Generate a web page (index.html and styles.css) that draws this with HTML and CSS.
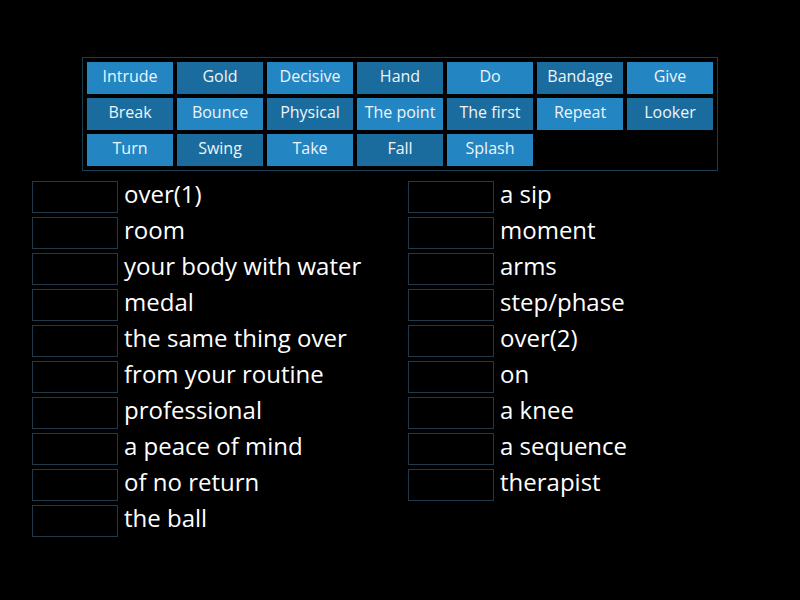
FILE: index.html
```html
<!DOCTYPE html>
<html lang="en">
<head>
    <meta charset="UTF-8">
    <title>Match up</title>
    <link rel="stylesheet" href="styles.css">
</head>
<body>
    <div class="bank">
        <div class="tile light">Intrude</div>
        <div class="tile dark">Gold</div>
        <div class="tile light">Decisive</div>
        <div class="tile dark">Hand</div>
        <div class="tile light">Do</div>
        <div class="tile dark">Bandage</div>
        <div class="tile light">Give</div>
        <div class="tile dark">Break</div>
        <div class="tile light">Bounce</div>
        <div class="tile dark">Physical</div>
        <div class="tile light">The point</div>
        <div class="tile dark">The first</div>
        <div class="tile light">Repeat</div>
        <div class="tile dark">Looker</div>
        <div class="tile light">Turn</div>
        <div class="tile dark">Swing</div>
        <div class="tile light">Take</div>
        <div class="tile dark">Fall</div>
        <div class="tile light">Splash</div>
    </div>

    <div class="matches">
        <div class="col">
            <div class="row"><span class="slot"></span><span class="clue">over(1)</span></div>
            <div class="row"><span class="slot"></span><span class="clue">room</span></div>
            <div class="row"><span class="slot"></span><span class="clue">your body with water</span></div>
            <div class="row"><span class="slot"></span><span class="clue">medal</span></div>
            <div class="row"><span class="slot"></span><span class="clue">the same thing over</span></div>
            <div class="row"><span class="slot"></span><span class="clue">from your routine</span></div>
            <div class="row"><span class="slot"></span><span class="clue">professional</span></div>
            <div class="row"><span class="slot"></span><span class="clue">a peace of mind</span></div>
            <div class="row"><span class="slot"></span><span class="clue">of no return</span></div>
            <div class="row"><span class="slot"></span><span class="clue">the ball</span></div>
        </div>
        <div class="col">
            <div class="row"><span class="slot"></span><span class="clue">a sip</span></div>
            <div class="row"><span class="slot"></span><span class="clue">moment</span></div>
            <div class="row"><span class="slot"></span><span class="clue">arms</span></div>
            <div class="row"><span class="slot"></span><span class="clue">step/phase</span></div>
            <div class="row"><span class="slot"></span><span class="clue">over(2)</span></div>
            <div class="row"><span class="slot"></span><span class="clue">on</span></div>
            <div class="row"><span class="slot"></span><span class="clue">a knee</span></div>
            <div class="row"><span class="slot"></span><span class="clue">a sequence</span></div>
            <div class="row"><span class="slot"></span><span class="clue">therapist</span></div>
        </div>
    </div>
</body>
</html>
```

FILE: styles.css
```css
body {
    margin: 0;
    background-color: #000;
    font-family: "Open Sans", "Noto Sans", sans-serif;
    color: #fff;
}
.bank {
    width: 626px;
    margin: 57px 0 0 82px;
    padding: 4px;
    border: 1px solid #1b3d50;
    display: grid;
    grid-template-columns: repeat(7, 86px);
    grid-auto-rows: 32px;
    gap: 4px;
}
.tile {
    display: flex;
    align-items: center;
    justify-content: center;
    padding-bottom: 4px;
    box-sizing: border-box;
    font-size: 16px;
    color: #eef4f8;
    white-space: nowrap;
}
.tile.light { background-color: #2386c2; }
.tile.dark { background-color: #1b6c9e; }

.matches {
    display: flex;
    margin: 10px 0 0 32px;
}
.col {
    width: 376px;
    display: flex;
    flex-direction: column;
    gap: 4px;
}
.row {
    display: flex;
    align-items: center;
    height: 32px;
}
.slot {
    width: 84px;
    height: 30px;
    border: 1px solid #22394a;
    margin-right: 6px;
    flex: none;
}
.clue {
    font-size: 24px;
    line-height: 32px;
    margin-top: -6px;
    white-space: nowrap;
}
```
